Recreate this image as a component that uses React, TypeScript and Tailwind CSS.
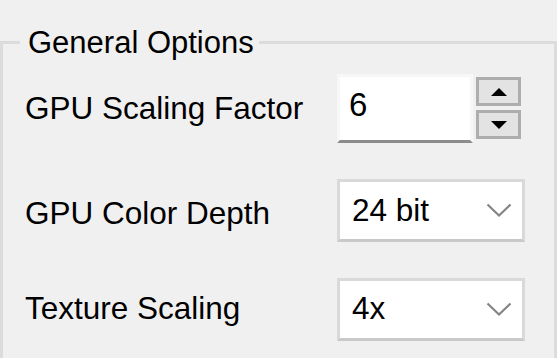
import type { ReactNode } from 'react';

const font = { fontFamily: '"Liberation Sans", Arial, sans-serif' };

function Chevron() {
  return (
    <svg width="26" height="15" viewBox="0 0 26 15" className="shrink-0">
      <polyline points="1.5,1.5 13,12.5 24.5,1.5" fill="none" stroke="#858585" strokeWidth="2.2" />
    </svg>
  );
}

function Combo({ value }: { value: string }) {
  return (
    <div className="ml-auto mr-[29px] flex h-[63px] w-[188px] items-center justify-between border-[3px] border-[#d9d9d9] border-b-[#c9c9c9] bg-white pl-[12px] pr-[10px]">
      <span className="text-[31.5px] leading-none text-black">{value}</span>
      <Chevron />
    </div>
  );
}

function SpinButton({ up }: { up?: boolean }) {
  return (
    <div className="flex h-[29px] w-[45px] items-center justify-center border-[3px] border-[#adadad] bg-[#e3e3e3]">
      <svg width="16" height="8" viewBox="0 0 16 8">
        {up ? <polygon points="8,0 16,8 0,8" fill="#000" /> : <polygon points="0,0 16,0 8,8" fill="#000" />}
      </svg>
    </div>
  );
}

function Row({ label, children, className }: { label: string; children: ReactNode; className?: string }) {
  return (
    <div className={`flex items-center ${className ?? ''}`}>
      <span className="text-[31.5px] leading-none text-black">{label}</span>
      {children}
    </div>
  );
}

export default function App() {
  return (
    <div className="relative h-[358px] w-[557px] overflow-hidden bg-[#f0f0f0]" style={font}>
      {/* Group box */}
      <div className="mt-[41px] h-[340px] w-[557px] border-[3px] border-b-0 border-[#dcdcdc] pl-[22px] pt-[30px]">
        <Row label="GPU Scaling Factor" className="h-[69px]">
          <div className="ml-auto mr-[33px] flex items-start">
            <div className="flex h-[69px] w-[136px] items-center border-[3px] border-[#f7f7f7] border-b-[#8c8c8c] bg-white pl-[9px] pb-[9px]">
              <span className="text-[33px] leading-none text-black">6</span>
            </div>
            <div className="ml-[3px] mt-[3px] flex flex-col gap-[4px]">
              <SpinButton up />
              <SpinButton />
            </div>
          </div>
        </Row>

        <Row label="GPU Color Depth" className="mt-[36px] h-[63px] [&>span:first-child]:pt-[7px]">
          <Combo value="24 bit" />
        </Row>

        <Row label="Texture Scaling" className="mt-[36px] h-[62px]">
          <Combo value="4x" />
        </Row>
      </div>

      {/* Group title over the top border */}
      <div className="absolute left-[20px] top-[27px] bg-[#f0f0f0] pl-[8px] pr-[5px] text-[31px] leading-none text-black">
        General Options
      </div>
    </div>
  );
}
